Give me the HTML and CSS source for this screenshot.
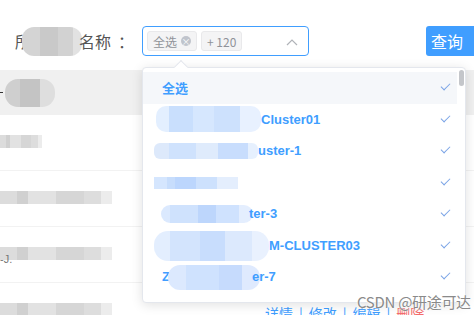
FILE: index.html
```html
<!DOCTYPE html>
<html lang="zh">
<head>
<meta charset="utf-8">
<title>集群选择</title>
<link rel="stylesheet" href="styles.css">
</head>
<body>
<div class="page">
  <div class="form-row">
    <div class="label"><span class="lc">所</span><span class="blur-label"></span><span class="lc">名称</span><span class="colon">：</span></div>
    <div class="select">
      <span class="tag">全选<span class="tag-close">×</span></span>
      <span class="tag">+ 120</span>
      <svg class="arrow" width="12" height="8" viewBox="0 0 12 8"><path d="M1 7 L6 2 L11 7" fill="none" stroke="#b0b3b8" stroke-width="1.2"/></svg>
    </div>
    <div class="btn">查询</div>
  </div>

  <div class="table">
    <div class="thead"><span class="dash"></span><span class="blur-pill"></span></div>
    <div class="trow"><span class="blur-g w42"></span></div>
    <div class="trow"><span class="blur-g w112"></span></div>
    <div class="trow"><span class="frag">-J.</span><span class="blur-g w112"></span></div>
    <div class="trow last"><span class="blur-g w112"></span>
      <span class="ops"><a>详情</a><span class="sep">|</span><a>修改</a><span class="sep">|</span><a>编辑</a><span class="sep">|</span><a class="del">删除</a></span>
    </div>
  </div>

  <div class="dropdown">
    <span class="popper-arrow"></span>
    <span class="scroll-thumb"></span>
    <ul class="list">
      <li class="item hover"><span class="txt">全选</span><span class="check"></span></li>
      <li class="item"><span class="bl b1"></span><span class="txt">Cluster01</span><span class="check"></span></li>
      <li class="item"><span class="bl b2"></span><span class="txt">uster-1</span><span class="check"></span></li>
      <li class="item"><span class="bl b3"></span><span class="txt"></span><span class="check"></span></li>
      <li class="item"><span class="bl b4"></span><span class="txt">ter-3</span><span class="check"></span></li>
      <li class="item"><span class="bl b5"></span><span class="txt">M-CLUSTER03</span><span class="check"></span></li>
      <li class="item"><span class="z">Z</span><span class="bl b6"></span><span class="txt">er-7</span><span class="check"></span></li>
    </ul>
  </div>

  <div class="watermark">CSDN @研途可达</div>
</div>
</body>
</html>
```
FILE: styles.css
```css
* { box-sizing: border-box; margin: 0; padding: 0; }
html, body { width: 474px; height: 315px; overflow: hidden; background: #fff; }
body { font-family: "Liberation Sans", "Noto Sans CJK SC", sans-serif; color: #606266; }
.page { position: relative; width: 474px; height: 315px; overflow: hidden; }

.form-row { display: flex; align-items: center; height: 70px; padding: 0 0 0 15px; padding-top: 12px; }
.label { display: flex; align-items: center; font-size: 16px; color: #555; width: 127px; }
.lc { font-family: "Noto Sans CJK SC", sans-serif; }
.blur-label { display: inline-block; width: 60px; height: 29px; margin-left: -9px; margin-right: -3px; border-radius: 12px;
  background: linear-gradient(90deg, #d4d4d4 0 30%, #c9c9c9 30% 60%, #d2d2d2 60% 85%, #e2e2e2 85%); }
.colon { margin-left: 7px; font-family: "Noto Sans CJK SC", sans-serif; }

.select { display: flex; align-items: center; gap: 4px; width: 167px; height: 30px; border: 1px solid #409eff; border-radius: 4px; padding-left: 4px; position: relative; }
.tag { display: inline-flex; align-items: center; height: 20px; padding: 0 5px; background: #f4f4f5; border: 1px solid #e9e9eb; border-radius: 3px; font-size: 12px; color: #909399; font-family: "Noto Sans CJK SC", sans-serif; }
.tag-close { display: inline-flex; align-items: center; justify-content: center; width: 10px; height: 10px; margin-left: 4px; border-radius: 50%; background: #c0c4cc; color: #fff; font-size: 9px; line-height: 1; }
.arrow { position: absolute; right: 10px; top: 11px; }

.btn { margin-left: auto; margin-right: -10px; width: 58px; height: 30px; background: #409eff; color: #fff; font-size: 16px; border-radius: 3px; display: flex; align-items: center; padding-left: 5px; font-family: "Noto Sans CJK SC", sans-serif; }

.table { display: flex; flex-direction: column; }
.thead { height: 45px; background: #f0f0f0; display: flex; align-items: center; position: relative; }
.dash { position: absolute; left: 0; top: 22px; width: 3px; height: 1px; background: #333; }
.blur-pill { display: block; width: 50px; height: 28px; margin-left: 5px; border-radius: 13px;
  background: linear-gradient(90deg, #cfcfcf 0 30%, #c4c4c4 30% 70%, #dedede 70%); }
.trow { height: 56px; display: flex; align-items: center; border-bottom: 1px solid #f2f2f2; position: relative; }
.blur-g { display: block; height: 13px; margin-top: -2px; background: linear-gradient(90deg, #dcdcdc 0 15%, #d0d0d0 15% 25%, #e2e2e2 25% 50%, #d6d6d6 50% 75%, #dddddd 75% 90%, #ececec 90%); }
.w42 { width: 42px; }
.w112 { width: 112px; }
.frag { position: absolute; left: 0; top: 26px; font-size: 11px; color: #777; }
.ops { position: absolute; left: 265px; top: 20px; font-size: 14px; color: #409eff; font-family: "Noto Sans CJK SC", sans-serif; white-space: nowrap; }
.ops a { color: #409eff; }
.ops a.del { color: #f56c6c; }
.sep { margin: 0 6px; }

.dropdown { position: absolute; left: 142px; top: 67px; width: 324px; height: 236px; background: #fff; border: 1px solid #e4e7ed; border-radius: 4px; box-shadow: 0 2px 12px rgba(0,0,0,0.12); }
.popper-arrow { position: absolute; left: 33px; top: -6px; width: 10px; height: 10px; background: #fff; border-left: 1px solid #e4e7ed; border-top: 1px solid #e4e7ed; transform: rotate(45deg); }
.scroll-thumb { position: absolute; right: 1px; top: 2px; width: 5px; height: 16px; border-radius: 3px; background: #c4c6ca; }
.list { list-style: none; padding-top: 4px; }
.item { position: relative; height: 31.5px; display: flex; align-items: center; padding-left: 19px; font-size: 13px; font-weight: bold; color: #409eff; }
.item.hover { background: #f5f7fa; margin-right: 8px; }
.txt { position: relative; }
.check { position: absolute; left: 298px; top: 11px; width: 9px; height: 5px; border-left: 1.3px solid #7aa3e6; border-bottom: 1.3px solid #7aa3e6; transform: rotate(-45deg); }
.bl { position: absolute; border-radius: 10px; }
.b1 { left: 13px; top: 2px; width: 105px; height: 26px; background: linear-gradient(90deg, #e3efff 0 12%, #c9dffd 12% 35%, #d6e7fe 35% 55%, #cde1fd 55% 80%, #e8f1ff 80%); }
.b1 + .txt { margin-left: 99px; }
.b2 { left: 11px; top: 8px; width: 104px; height: 16px; border-radius: 6px; background: linear-gradient(90deg, #dde9fb 0 14%, #cfe2fd 14% 40%, #dfebfc 40% 62%, #c8ddfd 62% 90%, #e6f0fe 90%); }
.b2 + .txt { margin-left: 96px; }
.b3 { left: 11px; top: 10px; width: 84px; height: 12px; border-radius: 0; background: linear-gradient(90deg, #d5e6fe 0 15%, #c7ddfc 15% 25%, #bcd6fd 25% 50%, #cde1fd 50% 75%, #e4eefd 75%); }
.b4 { left: 18px; top: 7px; width: 92px; height: 18px; background: linear-gradient(90deg, #dbe9fe 0 10%, #cfe2fd 10% 40%, #bdd6fc 40% 60%, #cfe2fe 60% 85%, #e4eefe 85%); }
.b4 + .txt { margin-left: 87px; }
.b5 { left: 11px; top: 1px; width: 115px; height: 30px; border-radius: 14px; background: linear-gradient(90deg, #e3eefe 0 14%, #d3e4fd 14% 40%, #c8ddfd 40% 62%, #dce9fd 62% 85%, #e9f1fe 85%); }
.b5 + .txt { margin-left: 107px; }
.b6 { left: 25px; top: 4px; width: 92px; height: 25px; border-radius: 12px; background: linear-gradient(90deg, #dce9fe 0 20%, #cfe2fe 20% 55%, #c6dbfd 55% 80%, #dfeafe 80%); }
.z { position: relative; }
.z + .b6 + .txt { margin-left: 82px; }

.watermark { position: absolute; left: 357px; top: 291px; font-size: 15px; color: #8a8a8a; font-family: "Noto Sans CJK SC", "Liberation Sans", sans-serif; text-shadow: 0 0 2px #fff, 0 0 2px #fff; letter-spacing: -0.3px; }
```
